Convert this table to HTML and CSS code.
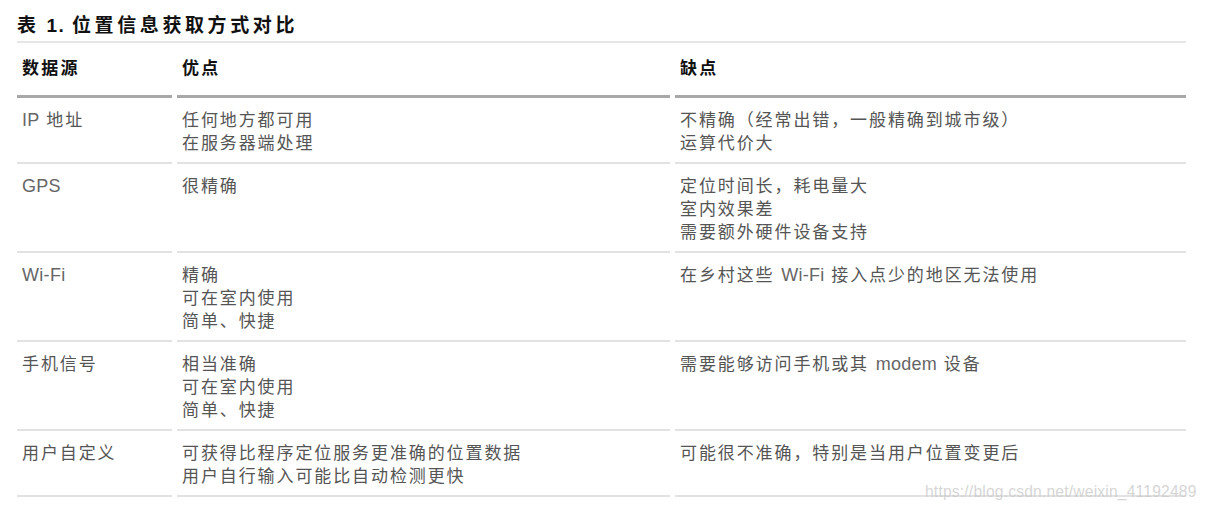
FILE: index.html
```html
<!DOCTYPE html>
<html lang="zh">
<head>
<meta charset="utf-8">
<title>表 1. 位置信息获取方式对比</title>
<link rel="stylesheet" href="styles.css">
</head>
<body>
<div class="page">
  <h3 class="caption">表<span class="num"> 1. </span>位置信息获取方式对比</h3>
  <table class="compare">
    <colgroup>
      <col class="c1"><col class="c2"><col class="c3">
    </colgroup>
    <thead>
      <tr><th>数据源</th><th>优点</th><th>缺点</th></tr>
    </thead>
    <tbody>
      <tr>
        <td><span class="lat">IP</span> 地址</td>
        <td>任何地方都可用<br>在服务器端处理</td>
        <td>不精确（经常出错，一般精确到城市级）<br>运算代价大</td>
      </tr>
      <tr>
        <td><span class="lat">GPS</span></td>
        <td>很精确</td>
        <td>定位时间长，耗电量大<br>室内效果差<br>需要额外硬件设备支持</td>
      </tr>
      <tr>
        <td><span class="lat">Wi-Fi</span></td>
        <td>精确<br>可在室内使用<br>简单、快捷</td>
        <td>在乡村这些 <span class="lat">Wi-Fi</span> 接入点少的地区无法使用</td>
      </tr>
      <tr>
        <td>手机信号</td>
        <td>相当准确<br>可在室内使用<br>简单、快捷</td>
        <td>需要能够访问手机或其 <span class="lat">modem</span> 设备</td>
      </tr>
      <tr>
        <td>用户自定义</td>
        <td>可获得比程序定位服务更准确的位置数据<br>用户自行输入可能比自动检测更快</td>
        <td>可能很不准确，特别是当用户位置变更后</td>
      </tr>
    </tbody>
  </table>
  <div class="watermark">https://blog.csdn.net/weixin_41192489</div>
</div>
</body>
</html>
```
FILE: styles.css
```css
html, body {
  margin: 0;
  padding: 0;
  background: #fff;
}
body {
  font-family: "Liberation Sans", Arial, "Noto Sans CJK SC", sans-serif;
}
.page {
  position: relative;
  width: 1207px;
  height: 511px;
  padding: 14px 0 0 17px;
  box-sizing: border-box;
}
.caption {
  margin: 0;
  width: 1169px;
  font-size: 19px;
  line-height: 24px;
  font-weight: bold;
  letter-spacing: 3.6px;
  color: #111;
  padding-bottom: 3px;
  border-bottom: 2px solid #e6e6e6;
}
.caption .num {
  letter-spacing: 1.5px;
}
.compare {
  border-collapse: separate;
  border-spacing: 5px 0;
  margin-left: -5px;
  width: 1179px;
  table-layout: fixed;
}
.c1 { width: 155px; }
.c2 { width: 493px; }
.c3 { width: 511px; }
.compare th {
  text-align: left;
  font-size: 17px;
  line-height: 22px;
  font-weight: bold;
  letter-spacing: 2.3px;
  color: #111;
  padding: 15px 5px;
  border-bottom: 3px solid #a8a8a8;
}
.compare td {
  vertical-align: top;
  font-size: 17px;
  line-height: 23px;
  letter-spacing: 1.9px;
  color: #555;
  padding: 11px 5px 7px;
  border-bottom: 2px solid #e2e2e2;
}
.lat {
  font-size: 18px;
  color: #666;
  letter-spacing: 0.3px;
}
.watermark {
  position: absolute;
  left: 925px;
  top: 483px;
  font-size: 15.6px;
  line-height: 18px;
  color: rgba(200, 200, 200, 0.75);
  letter-spacing: 0.2px;
}
```
